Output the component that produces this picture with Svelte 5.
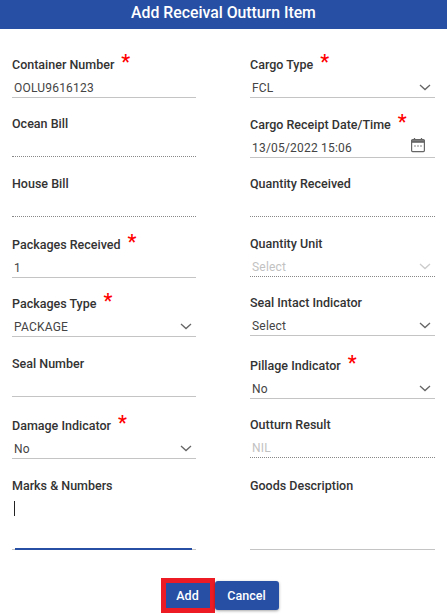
<script>
  const rows = [
    [
      { label: 'Container Number', value: 'OOLU9616123', required: true },
      { label: 'Cargo Type', value: 'FCL', kind: 'select', required: true }
    ],
    [
      { label: 'Ocean Bill', dotted: true, nudge: 'up1' },
      { label: 'Cargo Receipt Date/Time', value: '13/05/2022 15:06', kind: 'date', required: true }
    ],
    [
      { label: 'House Bill', dotted: true },
      { label: 'Quantity Received', dotted: true }
    ],
    [
      { label: 'Packages Received', value: '1', required: true },
      { label: 'Quantity Unit', value: 'Select', kind: 'select', dotted: true, disabled: true, nudge: 'up1' }
    ],
    [
      { label: 'Packages Type', value: 'PACKAGE', kind: 'select', required: true },
      { label: 'Seal Intact Indicator', value: 'Select', kind: 'select', nudge: 'up1' }
    ],
    [
      { label: 'Seal Number' },
      { label: 'Pillage Indicator', value: 'No', kind: 'select', required: true, nudge: 'down2' }
    ],
    [
      { label: 'Damage Indicator', value: 'No', kind: 'select', required: true, nudge: 'down1' },
      { label: 'Outturn Result', value: 'NIL', dotted: true, disabled: true }
    ]
  ];
</script>

<div class="dialog">
  <header class="title">Add Receival Outturn Item</header>

  <form class="form">
    {#each rows as row}
      {#each row as f}
        <div class="field {f.nudge || ''}">
          <div class="label" class:req={f.required}>
            {f.label}{#if f.required}<span class="star">*</span>{/if}
          </div>
          <div class="control" class:dotted={f.dotted} class:disabled={f.disabled}>
            <span class="value">{f.value || ''}</span>
            {#if f.kind === 'select'}
              <svg class="chevron" width="12" height="7" viewBox="0 0 12 7" fill="none">
                <path d="M1 1l5 4.6L11 1" stroke="currentColor" stroke-width="1.3" />
              </svg>
            {:else if f.kind === 'date'}
              <svg class="calendar" width="16" height="16" viewBox="0 0 16 16" fill="none">
                <rect x="1.6" y="2.6" width="12.8" height="12" rx="1" stroke="#666" stroke-width="1.2" />
                <path d="M1.6 3.2h12.8v2.6H1.6z" fill="#666" />
                <path d="M4.5 1v2M11.5 1v2" stroke="#666" stroke-width="1.3" />
                <path d="M4 9h2M7 9h2M10 9h2" stroke="#888" stroke-width="1" />
              </svg>
            {/if}
          </div>
        </div>
      {/each}
    {/each}

    <div class="field">
      <div class="label">Marks &amp; Numbers</div>
      <div class="area focused"><span class="caret"></span></div>
    </div>
    <div class="field">
      <div class="label">Goods Description</div>
      <div class="area"></div>
    </div>
  </form>

  <div class="actions">
    <button type="button" class="btn primary">Add</button>
    <button type="button" class="btn">Cancel</button>
  </div>
</div>

<style>
  :global(body) {
    background: #fff;
    font-family: Roboto, "Liberation Sans", sans-serif;
  }

  .dialog {
    width: 447px;
    height: 616px;
    overflow: hidden;
  }

  .title {
    height: 29px;
    background: #2750a5;
    color: #fff;
    font-size: 15.8px;
    font-weight: 500;
    line-height: 26px;
    text-align: center;
  }

  .form {
    display: grid;
    grid-template-columns: 184px 185px;
    grid-template-rows: 69px 60px 59px 61px 59px 60px 61px 92px;
    column-gap: 54px;
    padding: 0 12px;
  }

  .field {
    align-self: end;
  }

  .up1 {
    margin-bottom: 1px;
  }

  .down1 {
    margin-bottom: -1px;
  }

  .down2 {
    margin-bottom: -2px;
  }

  .label {
    height: 18px;
    font-size: 12.5px;
    font-weight: 500;
    line-height: 19px;
    color: #333;
    white-space: nowrap;
  }

  .label.req {
    line-height: 20px;
  }

  .star {
    margin-left: 7px;
    color: #f00;
    font-size: 20px;
    line-height: 0;
  }

  .control {
    display: flex;
    align-items: center;
    justify-content: space-between;
    height: 19px;
    padding: 5px 3px 0 2px;
    border-bottom: 1px solid #c4c4c4;
    box-sizing: content-box;
    font-size: 12px;
    letter-spacing: 0.2px;
    color: #444;
  }

  .dotted {
    border-bottom: 1px dotted #888;
  }

  .disabled {
    color: #c2c2c2;
  }

  .chevron {
    color: #666;
    margin-right: 1px;
  }

  .disabled .chevron {
    color: #ccc;
  }

  .calendar {
    margin: -6px 6px 0 0;
  }

  .area {
    position: relative;
    height: 55px;
    border-bottom: 1px solid #c4c4c4;
  }

  .area.focused::after {
    content: '';
    position: absolute;
    left: 3px;
    right: 4px;
    bottom: -1px;
    height: 2px;
    background: #2750a5;
  }

  .caret {
    position: absolute;
    left: 2px;
    top: 7px;
    width: 1px;
    height: 15px;
    background: #222;
  }

  .actions {
    display: flex;
    justify-content: center;
    align-items: center;
    margin-top: 28px;
    padding-right: 8px;
  }

  .btn {
    width: 64px;
    height: 29px;
    padding: 0;
    border: 0;
    border-radius: 3px;
    background: #2750a5;
    color: #fff;
    font-family: inherit;
    font-size: 12.5px;
    font-weight: 500;
    box-shadow: 0 1px 3px rgba(0, 0, 0, 0.35);
  }

  .primary {
    width: 54px;
    height: 35px;
    border: 5px solid #ed1c24;
    border-radius: 0;
    box-shadow: none;
    box-sizing: border-box;
  }
</style>
